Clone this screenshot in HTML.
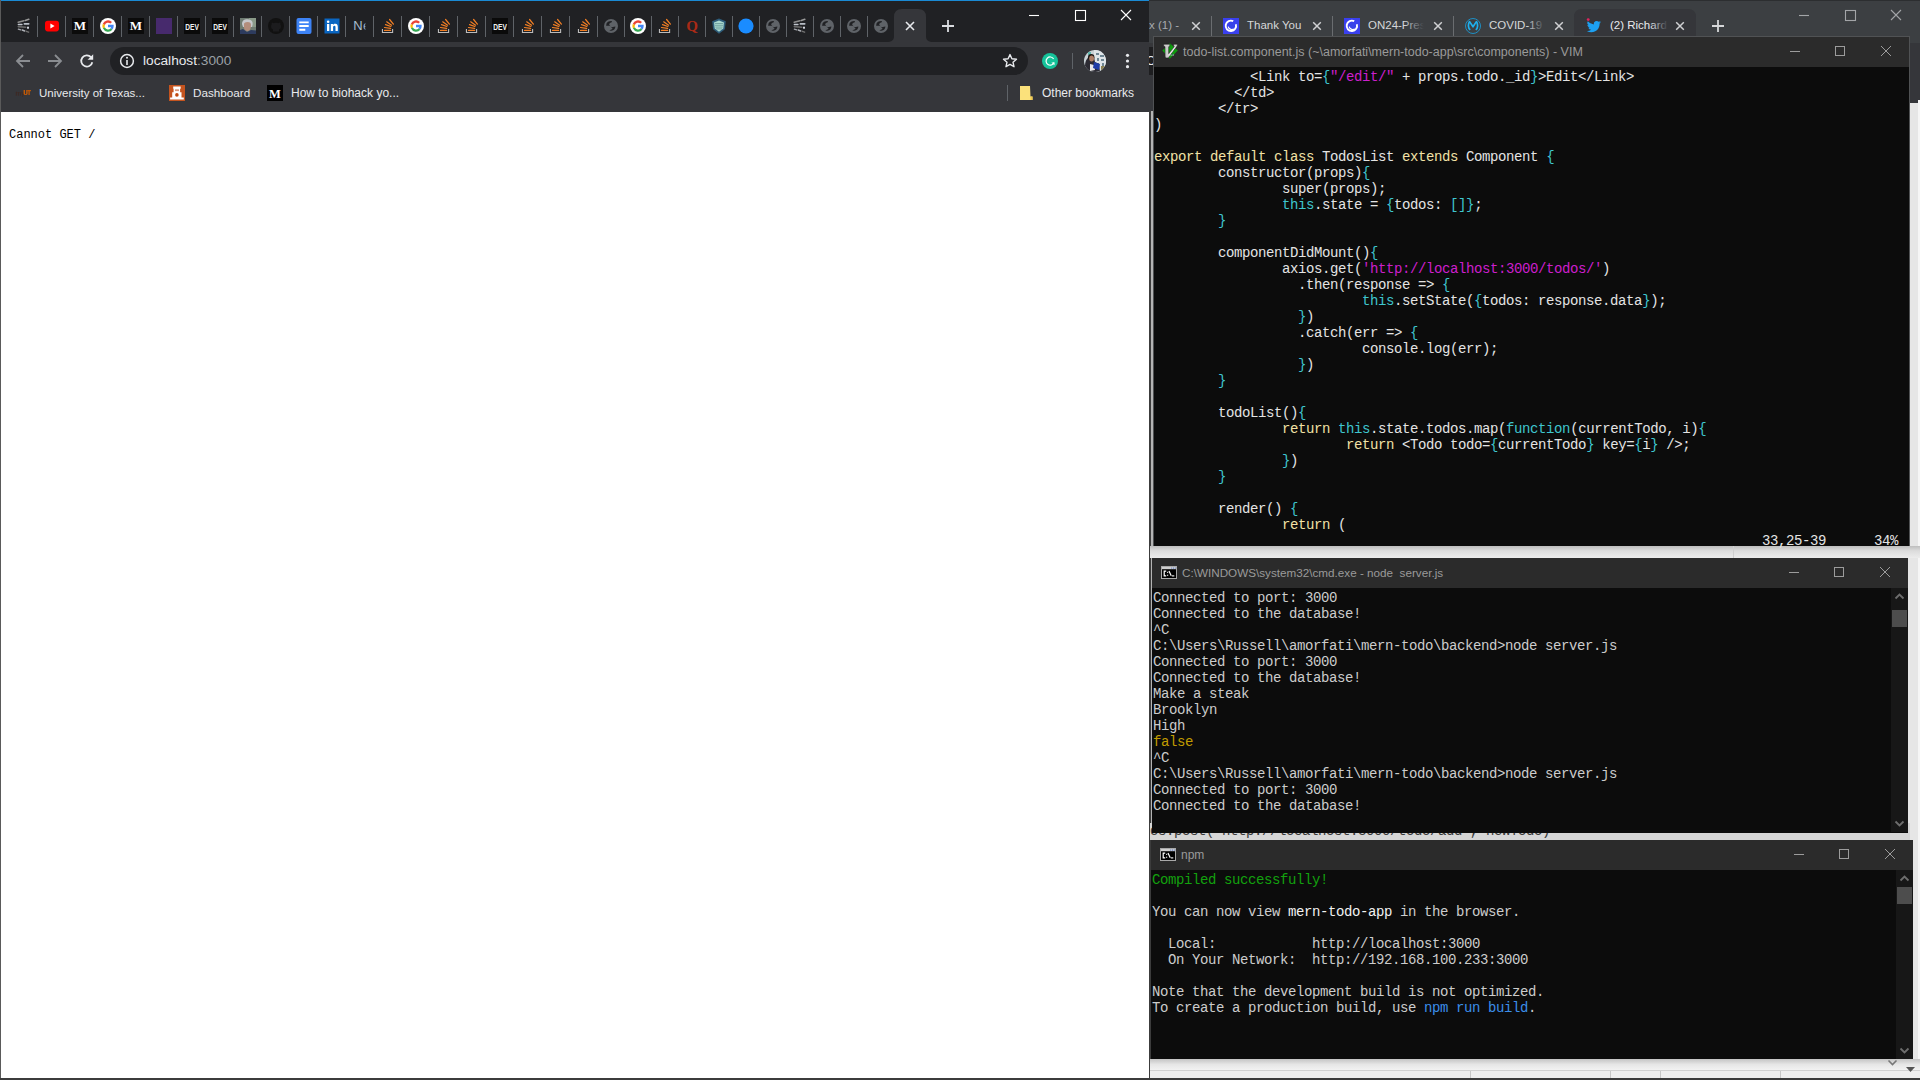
<!DOCTYPE html>
<html><head><meta charset="utf-8"><title>screen</title>
<style>
*{margin:0;padding:0;box-sizing:border-box}
html,body{width:1920px;height:1080px;overflow:hidden;background:#e4e4e4;font-family:"Liberation Sans",sans-serif}
.a{position:absolute}
svg.a{display:block;overflow:visible}
.mono{font-family:"Liberation Mono",monospace;font-size:14px;letter-spacing:-0.4px;line-height:16px;white-space:pre}
.ttl{font-size:13px;color:#9a9a9a;white-space:pre;line-height:16px}
.bm{font-size:12px;color:#e8eaed;white-space:pre;line-height:16px}
.rt{font-size:11.5px;color:#d6d7d9;white-space:pre;line-height:16px}
.k{color:#f2e2a6}.c{color:#3fc6cf}.s{color:#cc1fcc}
</style></head><body>

<svg width="0" height="0" style="position:absolute">
<defs>
<symbol id="fan" viewBox="0 0 16 16"><g stroke-linecap="round">
 <path d="M2.2 4.3L7.8 2.7" stroke="#8d8d8d" stroke-width="1.5"/>
 <path d="M9.2 2.5L12.8 1.3" stroke="#9a9a9a" stroke-width="1.6"/>
 <path d="M2.3 6.5H6" stroke="#bfc4cc" stroke-width="1.3"/>
 <path d="M8.4 5.8H12.7" stroke="#b8bec6" stroke-width="1.7"/>
 <path d="M2.3 8.6L9.7 9.3" stroke="#6a6a6a" stroke-width="1.6"/>
 <rect x="11" y="8.7" width="2" height="2" fill="#d0d4dc"/>
 <path d="M2.3 11.1L4.7 11.8" stroke="#a5a8ae" stroke-width="1.2"/>
 <path d="M6.2 12L8.7 13" stroke="#b0b3b8" stroke-width="1.4"/>
 <path d="M10.3 13.3L12.6 14.2" stroke="#707070" stroke-width="1.4"/>
</g></symbol>
<symbol id="yt" viewBox="0 0 16 16"><rect x="1" y="2.8" width="14" height="10.6" rx="2.8" fill="#f00"/><path d="M6.4 5.6v4.9l4.2-2.45z" fill="#fff"/></symbol>
<symbol id="med" viewBox="0 0 16 16"><rect width="16" height="16" fill="#0b0b0b"/><text x="8" y="12.2" font-family="Liberation Serif" font-weight="bold" font-size="13" text-anchor="middle" fill="#fff">M</text></symbol>
<symbol id="g" viewBox="0 0 16 16"><circle cx="8" cy="8" r="8" fill="#fff"/>
 <g fill="none" stroke-width="2.3">
 <path d="M11.2 4.8A4.5 4.5 0 0 0 3.8 6.5" stroke="#ea4335"/>
 <path d="M3.8 6.5A4.5 4.5 0 0 0 3.9 9.9" stroke="#fbbc05"/>
 <path d="M3.9 9.9A4.5 4.5 0 0 0 11.5 10.9" stroke="#34a853"/>
 <path d="M11.5 10.9A4.5 4.5 0 0 0 12.5 8H8" stroke="#4285f4"/>
 </g></symbol>
<symbol id="purp" viewBox="0 0 16 16"><rect width="16" height="16" fill="#472a6d"/></symbol>
<symbol id="dev" viewBox="0 0 16 16"><rect width="16" height="16" fill="#0a0a0a"/><text x="8" y="12.2" font-family="Liberation Sans" font-weight="bold" font-size="9.4" text-anchor="middle" textLength="13.6" lengthAdjust="spacingAndGlyphs" fill="#f2f2f2">DEV</text></symbol>
<symbol id="photo" viewBox="0 0 16 16"><rect width="16" height="16" fill="#6f7c72"/><rect x="9" width="7" height="9" fill="#8a9a88"/><path d="M2 6C2 2 5 1 8 1.3c3 .3 5 2 4.6 5.3L12 9H3z" fill="#c6c8cc"/><path d="M4 6c0-1 1-2 3.5-2S11 5 11 7l-.3 3c-.3 2-1.7 3-3.3 3S4.3 12 4 10z" fill="#b38d7c"/><path d="M0 16v-4l3-1 4 3 4-2 5 .5V16z" fill="#2d3b5e"/></symbol>
<symbol id="gh" viewBox="0 0 16 16"><circle cx="8" cy="8" r="8" fill="#111"/><path d="M5 13.5v-2c-1-.3-2-1.4-2-3.2 0-.8.3-1.4.7-1.9-.1-.4-.2-1.1.1-1.9.7 0 1.4.4 1.9.8a6.6 6.6 0 0 1 4.6 0c.5-.4 1.2-.8 1.9-.8.3.8.2 1.5.1 1.9.4.5.7 1.1.7 1.9 0 1.8-1 2.9-2 3.2v2z" fill="#1c1c1e"/></symbol>
<symbol id="docs" viewBox="0 0 16 16"><rect x="0.5" y="0" width="15" height="16" rx="2" fill="#3d83f6"/><path d="M3.3 3.4h9.4v1.9H3.3zM3.3 7.1h9.4v1.9H3.3zM3.3 10.8h6v1.9h-6z" fill="#fff"/></symbol>
<symbol id="li" viewBox="0 0 16 16"><rect x="0.5" y="0.5" width="15" height="15" fill="#0a66c2"/><path d="M3 6h2.3v7H3zM4.15 2.5a1.3 1.3 0 1 1 0 2.6 1.3 1.3 0 0 1 0-2.6zM6.8 6h2.2v1c.4-.7 1.2-1.2 2.3-1.2 2.1 0 2.5 1.4 2.5 3.2V13h-2.3V9.6c0-.8 0-1.8-1.1-1.8s-1.3.9-1.3 1.8V13H6.8z" fill="#fff"/></symbol>
<symbol id="ne" viewBox="0 0 16 16"><clipPath id="neclip"><rect x="0" y="0" width="13.4" height="16"/></clipPath><g clip-path="url(#neclip)"><text x="1.3" y="12" font-family="Liberation Sans" font-size="13" fill="#a9bdd0">N<tspan fill="#9aa9bc" dx="0.3">e</tspan></text></g></symbol>
<symbol id="so" viewBox="0 0 16 16"><path d="M2.45 10.9V14.45H12.6V10.9" fill="none" stroke="#bcbbbb" stroke-width="1.1"/><g stroke="#f48024" stroke-width="1.2" stroke-linecap="round" fill="none"><path d="M4.5 12.4H10.6"/><path d="M4.5 9.5L10.6 10.3"/><path d="M5.5 6.6L10.9 8.5"/><path d="M6.7 3.8L11.6 7.2"/><path d="M9.6 1.5L13.4 6.1"/></g></symbol>
<symbol id="globe" viewBox="0 0 16 16"><circle cx="8" cy="8" r="7" fill="#5f6368"/><path d="M8.8 3.1C6.8 2.9 4.8 3.6 3.6 5.3L3.1 7.7H7.3L6.1 6.5C6.5 5.2 7.6 4.6 8.8 4.3z" fill="#202124"/><path d="M7.3 7.7C7.6 8.9 8.6 9.4 9.8 9.1L12.4 8.6C12.3 10.9 10.9 12.6 8.3 12.8L6.3 12.5C7.6 11.9 9 11.6 9.6 10.6 8.8 9.8 7.8 9 7.3 7.7z" fill="#202124"/></symbol>
<symbol id="quora" viewBox="0 0 16 16"><text x="8" y="12.8" font-family="Liberation Serif" font-weight="bold" font-size="15" text-anchor="middle" fill="#a92a16">Q</text></symbol>
<symbol id="shield" viewBox="0 0 16 16"><path d="M8 0.5l6.8 2.8-.9 8L8 15.8 2.1 11.3l-.9-8z" fill="#2e5d7b"/><path d="M8 2.6l5 2-.7 6L8 13.7 3.7 10.6 3 4.6z" fill="#a8d8cf"/><path d="M4 5.5h8M4 7.3h8M4.3 9.1h7.4M5 10.9h6" stroke="#5f8f8f" stroke-width=".7"/></symbol>
<symbol id="blue" viewBox="0 0 16 16"><circle cx="8" cy="8" r="7.6" fill="#1a8cff"/></symbol>
<symbol id="ut" viewBox="0 0 16 16"><path d="M0.8 10.8V6.8H2V7.3C2.4 6.8 3.4 6.7 3.8 7.3 4.3 6.7 5.8 6.7 5.9 7.8V10.8H4.9V8C4.9 7.4 4 7.4 3.9 8V10.8H2.9V8C2.9 7.4 2 7.4 1.9 8V10.8z" fill="#3d2a25"/><path d="M6.2 6.8H7.3L8 9.5 8.7 6.8H7.8" fill="none" stroke="#3d2a25" stroke-width="0"/><path d="M6.3 6.8H7.3L7.9 9.3 8.5 6.8H9.4L7.9 11.9H7L7.4 10.6z" fill="#3d2a25" opacity=".9"/><path d="M8.6 5H10V8.6C10 9.4 11.2 9.4 11.2 8.6V5H12.6V8.7C12.6 10.5 8.6 10.5 8.6 8.7z" fill="#c05a08"/><path d="M12.3 5H16V6.3H14.8V10H13.4V6.3H12.3z" fill="#b85406"/></symbol>
<symbol id="dash" viewBox="0 0 16 16"><rect width="16" height="16" fill="#c4541f"/><path d="M4.2 1.5H11.7V3.7H11.1V7.2H12.5V12.5H14.8V14.5H1.1V12.5H3.2V7.2H4.6V3.7H4.2z" fill="#fff"/><rect x="6" y="4.3" width="4" height="1.8" fill="#d99a80"/><circle cx="7.9" cy="9.9" r="1.8" fill="#c24a10"/></symbol>
<symbol id="medbm" viewBox="0 0 16 16"><rect width="16" height="16" fill="#000"/><text x="8" y="12.6" font-family="Liberation Serif" font-weight="bold" font-size="12.5" text-anchor="middle" fill="#fff">M</text></symbol>
<symbol id="thank" viewBox="0 0 16 16"><rect width="16" height="16" fill="#3a40ee"/><path d="M10.2 3.2A5.2 5.2 0 1 0 12.8 6.2" fill="none" stroke="#fff" stroke-width="1.9"/><path d="M5.3 8.6C5.6 11 8.3 12.3 10.8 11" fill="none" stroke="#fff" stroke-width="1.3"/><circle cx="8.6" cy="7.6" r="2.6" fill="#3844e8"/></symbol>
<symbol id="mule" viewBox="0 0 16 16"><circle cx="8" cy="8" r="7.5" fill="none" stroke="#1e8fc4" stroke-width="1"/><path d="M5.2 11.9C3 10 2.8 6 4.6 3.6L8 8.8 11.4 3.6C13.2 6 13 10 10.8 11.9" fill="none" stroke="#1eb0ee" stroke-width="1.7" stroke-linejoin="round"/></symbol>
<symbol id="tw" viewBox="0 0 16 16"><path d="M15 4.2c-.5.2-1.1.4-1.7.5.6-.4 1.1-1 1.3-1.6-.6.3-1.2.6-1.9.7A2.9 2.9 0 0 0 7.8 6.4 8.3 8.3 0 0 1 1.8 3.3a2.9 2.9 0 0 0 .9 3.9c-.5 0-.9-.2-1.3-.4 0 1.4 1 2.6 2.3 2.9-.4.1-.9.1-1.3 0 .4 1.2 1.5 2 2.7 2a5.9 5.9 0 0 1-4.3 1.2A8.3 8.3 0 0 0 13.6 5.9v-.4c.6-.4 1-.8 1.4-1.3z" fill="#1da1f2"/><circle cx="2.2" cy="1.6" r="1.4" fill="#e0245e"/></symbol>
<symbol id="vimico" viewBox="0 0 16 16"><path d="M0.3 7.6L7.8 0.2 15.8 7.6 7.8 15.8z" fill="#0d9c0d"/><path d="M1.7 1.2H7.8V3.3L6.7 3.7V10.6L12.3 3.6 11.6 3.3V1.2H15.3V3.3L14.4 3.7 6.4 14.9H3.5L3 3.7 1.7 3.3z" fill="#cdcdcd" stroke="#1b1b1b" stroke-width=".55"/><path d="M13.6 3.6L6.9 12.6" stroke="#f4f4f4" stroke-width=".9"/><path d="M3.6 3.8V13.8" stroke="#9a9a9a" stroke-width=".8"/><path d="M8.2 12.3h1.1l.3-.9h.9l-.3.9h.8l.3-.9h.9l-.4 1.2H8z" fill="#c8c8d8"/><circle cx="10.4" cy="11.2" r=".45" fill="#2233aa"/></symbol>
<symbol id="cmdico" viewBox="0 0 16 13"><rect x="0.5" y="0.5" width="15" height="12" fill="#000" stroke="#a8a8a8"/><rect x="1" y="1" width="14" height="2.2" fill="#cfcfcf"/><path d="M10.2 2.1h1M12 2.1h1M13.8 2.1h1" stroke="#3a62c0" stroke-width=".9"/><path d="M5.2 5.2H3.2V9.8H5.2" fill="none" stroke="#fff" stroke-width="1.2"/><rect x="6.1" y="5.8" width="1.1" height="1.1" fill="#fff"/><rect x="6.1" y="8.7" width="1.1" height="1.1" fill="#fff"/><path d="M8 5L10.2 9.7" stroke="#fff" stroke-width="1.2"/><path d="M10.8 9.9H13.3" stroke="#fff" stroke-width="1.1"/></symbol>
</defs></svg>

<!-- ===== right side: background browser ===== -->
<div class="a" style="left:1149px;top:0;width:771px;height:1080px;background:#e6e6e6"></div>
<div class="a" style="left:1149px;top:0;width:771px;height:43px;background:#3c3f42;border-top:1px solid #2c2e30"></div>
<div class="a" style="left:1149px;top:43px;width:771px;height:60px;background:#35363a"></div>
<div class="a" style="left:1918px;top:100px;width:2px;height:980px;background:#f6f6f6"></div>
<div class="a rt" style="left:1149px;top:17px;color:#a9acb0">x (1) -</div>
<div class="a" style="left:1186px;top:10px;width:26px;height:24px;background:linear-gradient(90deg,rgba(60,63,66,0),#3c3f42 40%)"></div>
<svg class="a" style="left:1223px;top:18px" width="16" height="16"><use href="#thank"/></svg>
<div class="a rt" style="left:1247px;top:17px">Thank You</div>
<svg class="a" style="left:1344px;top:18px" width="16" height="16"><use href="#thank"/></svg>
<div class="a rt" style="left:1368px;top:17px">ON24-Pres</div>
<div class="a" style="left:1404px;top:12px;width:22px;height:24px;background:linear-gradient(90deg,rgba(60,63,66,0),#3c3f42 90%)"></div>
<svg class="a" style="left:1465px;top:18px" width="16" height="16"><use href="#mule"/></svg>
<div class="a rt" style="left:1489px;top:17px">COVID-19 </div>
<div class="a" style="left:1527px;top:12px;width:20px;height:24px;background:linear-gradient(90deg,rgba(60,63,66,0),#3c3f42 90%)"></div>
<svg class="a" style="left:1574px;top:9px" width="122" height="27"><path d="M0 27 V8 Q0 0 8 0 H114 Q122 0 122 8 V27z" fill="#35363a"/></svg>
<svg class="a" style="left:1586px;top:18px" width="16" height="16"><use href="#tw"/></svg>
<div class="a rt" style="left:1610px;top:17px;color:#e8eaed">(2) Richard</div>
<div class="a" style="left:1650px;top:12px;width:20px;height:24px;background:linear-gradient(90deg,rgba(53,54,58,0),#35363a 90%)"></div>
<svg class="a" style="left:1191px;top:21px" width="10" height="10"><path d="M1.2 1.2L8.8 8.8M8.8 1.2L1.2 8.8" stroke="#d0d1d3" stroke-width="1.5"/></svg>
<svg class="a" style="left:1312px;top:21px" width="10" height="10"><path d="M1.2 1.2L8.8 8.8M8.8 1.2L1.2 8.8" stroke="#d0d1d3" stroke-width="1.5"/></svg>
<svg class="a" style="left:1433px;top:21px" width="10" height="10"><path d="M1.2 1.2L8.8 8.8M8.8 1.2L1.2 8.8" stroke="#d0d1d3" stroke-width="1.5"/></svg>
<svg class="a" style="left:1554px;top:21px" width="10" height="10"><path d="M1.2 1.2L8.8 8.8M8.8 1.2L1.2 8.8" stroke="#d0d1d3" stroke-width="1.5"/></svg>
<svg class="a" style="left:1675px;top:21px" width="10" height="10"><path d="M1.2 1.2L8.8 8.8M8.8 1.2L1.2 8.8" stroke="#d0d1d3" stroke-width="1.5"/></svg>
<div class="a" style="left:1211px;top:16px;width:1px;height:21px;background:#6a6d70"></div>
<div class="a" style="left:1332px;top:16px;width:1px;height:21px;background:#6a6d70"></div>
<div class="a" style="left:1453px;top:16px;width:1px;height:21px;background:#6a6d70"></div>
<svg class="a" style="left:1712px;top:20px" width="12" height="12"><path d="M6 0V12M0 6H12" stroke="#d6d7d9" stroke-width="1.8"/></svg>
<svg class="a" style="left:1798px;top:9px" width="104" height="12"><path d="M1 6.5H11" stroke="#a3a5a8" stroke-width="1.1"/><rect x="47.5" y="1.5" width="10" height="10" fill="none" stroke="#a3a5a8" stroke-width="1.1"/><path d="M93 1L103 11M103 1L93 11" stroke="#a3a5a8" stroke-width="1.1"/></svg>

<!-- left strip between chrome and windows -->
<div class="a" style="left:1149px;top:43px;width:5px;height:4px;background:#36373a"></div>
<div class="a" style="left:1149px;top:47px;width:5px;height:28px;background:#1e1e20"></div>
<div class="a" style="left:1149px;top:75px;width:5px;height:36px;background:#35363a"></div>
<div class="a" style="left:1149px;top:111px;width:5px;height:967px;background:#b4b4b4"></div>
<div class="a" style="left:1149px;top:111px;width:2px;height:967px;background:#3c3c3c"></div>
<div class="a" style="left:1150px;top:546px;width:770px;height:12px;background:linear-gradient(#bdbdbd,#dcdcdc 40%,#ececec)"></div>
<div class="a" style="left:1150px;top:1059px;width:770px;height:11px;background:linear-gradient(#c4c4c4,#e6e6e6 50%,#f2f2f2)"></div>
<div class="a" style="left:1733px;top:546px;width:1px;height:12px;background:#cfcfcf"></div>
<div class="a" style="left:1149px;top:47px;width:5px;height:28px;overflow:hidden"><div class="a" style="left:-3px;top:6px;font-size:13px;line-height:16px;color:#e8eaed">C</div></div>
<!-- bottom status strip details -->
<div class="a" style="left:1150px;top:1070px;width:770px;height:1px;background:#d2d2d2"></div>
<div class="a" style="left:1150px;top:1071px;width:770px;height:7px;background:#efefef"></div>
<div class="a" style="left:1470px;top:1071px;width:1px;height:7px;background:#c8c8c8"></div>
<div class="a" style="left:1610px;top:1071px;width:1px;height:7px;background:#c8c8c8"></div>
<div class="a" style="left:1660px;top:1071px;width:1px;height:7px;background:#c8c8c8"></div>
<div class="a" style="left:1780px;top:1071px;width:1px;height:7px;background:#c8c8c8"></div>
<svg class="a" style="left:1887px;top:1059px" width="11" height="8"><path d="M1.5 1.5L5.5 5.5 9.5 1.5" fill="none" stroke="#777" stroke-width="1.6"/></svg>
<svg class="a" style="left:1906px;top:1067px" width="9" height="6"><path d="M0 0H9L4.5 5z" fill="#555"/></svg>
<!-- behind text strip -->
<div class="a mono" style="left:1150px;top:823px;color:#3a3a3a;width:760px;height:17px;overflow:hidden;background:#d6d6d6">os.post('http://localhost:3000/todo/add', newTodo)</div>

<!-- ===== VIM window ===== -->
<div id="vim" class="a" style="left:1153px;top:36px;width:757px;height:510px;background:#0c0c0c;border:1px solid #505254;border-bottom:0">
  <div class="a" style="left:0;top:0;width:755px;height:30px;background:#2b2b2b"></div>
  <svg class="a" style="left:8px;top:6px" width="16" height="16"><use href="#vimico"/></svg>
  <div class="a ttl" style="left:29px;top:7px;font-size:12.5px">todo-list.component.js (~\amorfati\mern-todo-app\src\components) - VIM</div>
  <svg class="a" style="left:635px;top:8px" width="104" height="12"><path d="M1 6.5H11" stroke="#9c9c9c" stroke-width="1"/><rect x="46.5" y="1.5" width="9" height="9" fill="none" stroke="#9c9c9c" stroke-width="1"/><path d="M92 1L102 11M102 1L92 11" stroke="#9c9c9c" stroke-width="1"/></svg>
  <div class="a mono" style="left:0;top:32px;color:#e4e4e4">            &lt;Link to=<span class="c">{</span><span class="s">"/edit/"</span> + props.todo._id<span class="c">}</span>&gt;Edit&lt;/Link&gt;
          &lt;/td&gt;
        &lt;/tr&gt;
)

<span class="k">export</span> <span class="k">default</span> <span class="k">class</span> TodosList <span class="k">extends</span> Component <span class="c">{</span>
        constructor(props)<span class="c">{</span>
                super(props);
                <span class="c">this</span>.state = <span class="c">{</span>todos: <span class="c">[]</span><span class="c">}</span>;
        <span class="c">}</span>

        componentDidMount()<span class="c">{</span>
                axios.get(<span class="s">'http://localhost:3000/todos/'</span>)
                  .then(response =&gt; <span class="c">{</span>
                          <span class="c">this</span>.setState(<span class="c">{</span>todos: response.data<span class="c">}</span>);
                  <span class="c">}</span>)
                  .catch(err =&gt; <span class="c">{</span>
                          console.log(err);
                  <span class="c">}</span>)
        <span class="c">}</span>

        todoList()<span class="c">{</span>
                <span class="k">return</span> <span class="c">this</span>.state.todos.map(<span class="c">function</span>(currentTodo, i)<span class="c">{</span>
                        <span class="k">return</span> &lt;Todo todo=<span class="c">{</span>currentTodo<span class="c">}</span> key=<span class="c">{</span>i<span class="c">}</span> /&gt;;
                <span class="c">}</span>)
        <span class="c">}</span>

        render() <span class="c">{</span>
                <span class="k">return</span> (</div>
  <div class="a mono" style="left:608px;top:496px;color:#e4e4e4">33,25-39</div>
  <div class="a mono" style="left:720px;top:496px;color:#e4e4e4">34%</div>
</div>

<!-- ===== cmd window ===== -->
<div id="cmd" class="a" style="left:1152px;top:558px;width:756px;height:275px;background:#0c0c0c">
  <div class="a" style="left:0;top:0;width:756px;height:30px;background:#2b2b2b"></div>
  <svg class="a" style="left:9px;top:8px" width="16" height="13"><use href="#cmdico"/></svg>
  <div class="a ttl" style="left:30px;top:7px;font-size:11.7px">C:\WINDOWS\system32\cmd.exe - node  server.js</div>
  <svg class="a" style="left:636px;top:8px" width="104" height="12"><path d="M1 6.5H11" stroke="#9c9c9c" stroke-width="1"/><rect x="46.5" y="1.5" width="9" height="9" fill="none" stroke="#9c9c9c" stroke-width="1"/><path d="M92 1L102 11M102 1L92 11" stroke="#9c9c9c" stroke-width="1"/></svg>
  <div class="a mono" style="left:1px;top:32px;color:#cccccc">Connected to port: 3000
Connected to the database!
^C
C:\Users\Russell\amorfati\mern-todo\backend&gt;node server.js
Connected to port: 3000
Connected to the database!
Make a steak
Brooklyn
High
<span style="color:#c19c00">false</span>
^C
C:\Users\Russell\amorfati\mern-todo\backend&gt;node server.js
Connected to port: 3000
Connected to the database!</div>
</div>
<div class="a" style="left:1891px;top:588px;width:17px;height:244px;background:#171717"></div>
<svg class="a" style="left:1891px;top:588px" width="17" height="17"><path d="M4.5 10.5L8.5 6.5 12.5 10.5" fill="none" stroke="#6e6e6e" stroke-width="1.8"/></svg>
<div class="a" style="left:1892px;top:610px;width:15px;height:17px;background:#4d4d4d"></div>
<svg class="a" style="left:1891px;top:815px" width="17" height="17"><path d="M4.5 6.5L8.5 10.5 12.5 6.5" fill="none" stroke="#6e6e6e" stroke-width="1.8"/></svg>

<!-- ===== npm window ===== -->
<div id="npm" class="a" style="left:1151px;top:840px;width:762px;height:219px;background:#0c0c0c">
  <div class="a" style="left:0;top:0;width:762px;height:30px;background:#2b2b2b"></div>
  <svg class="a" style="left:9px;top:8px" width="16" height="13"><use href="#cmdico"/></svg>
  <div class="a ttl" style="left:30px;top:7px;font-size:12px">npm</div>
  <svg class="a" style="left:642px;top:8px" width="104" height="12"><path d="M1 6.5H11" stroke="#9c9c9c" stroke-width="1"/><rect x="46.5" y="1.5" width="9" height="9" fill="none" stroke="#9c9c9c" stroke-width="1"/><path d="M92 1L102 11M102 1L92 11" stroke="#9c9c9c" stroke-width="1"/></svg>
  <div class="a mono" style="left:1px;top:32px;color:#cccccc"><span style="color:#13a10e">Compiled successfully!</span>

You can now view <span style="color:#f2f2f2">mern-todo-app</span> in the browser.

  Local:            http://localhost:3000
  On Your Network:  http://192.168.100.233:3000

Note that the development build is not optimized.
To create a production build, use <span style="color:#3b8eea">npm run build</span>.</div>
</div>
<div class="a" style="left:1896px;top:870px;width:17px;height:189px;background:#171717"></div>
<svg class="a" style="left:1896px;top:870px" width="17" height="17"><path d="M4.5 10.5L8.5 6.5 12.5 10.5" fill="none" stroke="#6e6e6e" stroke-width="1.8"/></svg>
<div class="a" style="left:1897px;top:887px;width:15px;height:17px;background:#4d4d4d"></div>
<svg class="a" style="left:1896px;top:1042px" width="17" height="17"><path d="M4.5 6.5L8.5 10.5 12.5 6.5" fill="none" stroke="#6e6e6e" stroke-width="1.8"/></svg>

<!-- ===== Chrome window ===== -->
<div id="chrome" class="a" style="left:0;top:0;width:1149px;height:1080px;background:#fff;overflow:hidden">
  <div class="a" style="left:0;top:0;width:1149px;height:42px;background:#202124"></div>
  <div class="a" style="left:0;top:42px;width:1149px;height:70px;background:#35363a"></div>
  <svg class="a" style="left:16px;top:18px" width="16" height="16"><use href="#fan"/></svg>
<svg class="a" style="left:44px;top:18px" width="16" height="16"><use href="#yt"/></svg>
<svg class="a" style="left:72px;top:18px" width="16" height="16"><use href="#med"/></svg>
<svg class="a" style="left:100px;top:18px" width="16" height="16"><use href="#g"/></svg>
<svg class="a" style="left:128px;top:18px" width="16" height="16"><use href="#med"/></svg>
<svg class="a" style="left:156px;top:18px" width="16" height="16"><use href="#purp"/></svg>
<svg class="a" style="left:184px;top:18px" width="16" height="16"><use href="#dev"/></svg>
<svg class="a" style="left:212px;top:18px" width="16" height="16"><use href="#dev"/></svg>
<svg class="a" style="left:240px;top:18px" width="16" height="16"><use href="#photo"/></svg>
<svg class="a" style="left:268px;top:18px" width="16" height="16"><use href="#gh"/></svg>
<svg class="a" style="left:296px;top:18px" width="16" height="16"><use href="#docs"/></svg>
<svg class="a" style="left:324px;top:18px" width="16" height="16"><use href="#li"/></svg>
<svg class="a" style="left:352px;top:18px" width="16" height="16"><use href="#ne"/></svg>
<svg class="a" style="left:380px;top:18px" width="16" height="16"><use href="#so"/></svg>
<svg class="a" style="left:408px;top:18px" width="16" height="16"><use href="#g"/></svg>
<svg class="a" style="left:436px;top:18px" width="16" height="16"><use href="#so"/></svg>
<svg class="a" style="left:464px;top:18px" width="16" height="16"><use href="#so"/></svg>
<svg class="a" style="left:492px;top:18px" width="16" height="16"><use href="#dev"/></svg>
<svg class="a" style="left:520px;top:18px" width="16" height="16"><use href="#so"/></svg>
<svg class="a" style="left:548px;top:18px" width="16" height="16"><use href="#so"/></svg>
<svg class="a" style="left:576px;top:18px" width="16" height="16"><use href="#so"/></svg>
<svg class="a" style="left:603px;top:18px" width="16" height="16"><use href="#globe"/></svg>
<svg class="a" style="left:630px;top:18px" width="16" height="16"><use href="#g"/></svg>
<svg class="a" style="left:657px;top:18px" width="16" height="16"><use href="#so"/></svg>
<svg class="a" style="left:684px;top:18px" width="16" height="16"><use href="#quora"/></svg>
<svg class="a" style="left:711px;top:18px" width="16" height="16"><use href="#shield"/></svg>
<svg class="a" style="left:738px;top:18px" width="16" height="16"><use href="#blue"/></svg>
<svg class="a" style="left:765px;top:18px" width="16" height="16"><use href="#globe"/></svg>
<svg class="a" style="left:792px;top:18px" width="16" height="16"><use href="#fan"/></svg>
<svg class="a" style="left:819px;top:18px" width="16" height="16"><use href="#globe"/></svg>
<svg class="a" style="left:846px;top:18px" width="16" height="16"><use href="#globe"/></svg>
<svg class="a" style="left:873px;top:18px" width="16" height="16"><use href="#globe"/></svg>
<div class="a" style="left:37px;top:16px;width:1px;height:21px;background:#5f6368"></div>
<div class="a" style="left:65px;top:16px;width:1px;height:21px;background:#5f6368"></div>
<div class="a" style="left:93px;top:16px;width:1px;height:21px;background:#5f6368"></div>
<div class="a" style="left:121px;top:16px;width:1px;height:21px;background:#5f6368"></div>
<div class="a" style="left:149px;top:16px;width:1px;height:21px;background:#5f6368"></div>
<div class="a" style="left:177px;top:16px;width:1px;height:21px;background:#5f6368"></div>
<div class="a" style="left:205px;top:16px;width:1px;height:21px;background:#5f6368"></div>
<div class="a" style="left:233px;top:16px;width:1px;height:21px;background:#5f6368"></div>
<div class="a" style="left:261px;top:16px;width:1px;height:21px;background:#5f6368"></div>
<div class="a" style="left:289px;top:16px;width:1px;height:21px;background:#5f6368"></div>
<div class="a" style="left:317px;top:16px;width:1px;height:21px;background:#5f6368"></div>
<div class="a" style="left:345px;top:16px;width:1px;height:21px;background:#5f6368"></div>
<div class="a" style="left:373px;top:16px;width:1px;height:21px;background:#5f6368"></div>
<div class="a" style="left:401px;top:16px;width:1px;height:21px;background:#5f6368"></div>
<div class="a" style="left:429px;top:16px;width:1px;height:21px;background:#5f6368"></div>
<div class="a" style="left:457px;top:16px;width:1px;height:21px;background:#5f6368"></div>
<div class="a" style="left:485px;top:16px;width:1px;height:21px;background:#5f6368"></div>
<div class="a" style="left:513px;top:16px;width:1px;height:21px;background:#5f6368"></div>
<div class="a" style="left:541px;top:16px;width:1px;height:21px;background:#5f6368"></div>
<div class="a" style="left:569px;top:16px;width:1px;height:21px;background:#5f6368"></div>
<div class="a" style="left:597px;top:16px;width:1px;height:21px;background:#5f6368"></div>
<div class="a" style="left:624px;top:16px;width:1px;height:21px;background:#5f6368"></div>
<div class="a" style="left:651px;top:16px;width:1px;height:21px;background:#5f6368"></div>
<div class="a" style="left:678px;top:16px;width:1px;height:21px;background:#5f6368"></div>
<div class="a" style="left:705px;top:16px;width:1px;height:21px;background:#5f6368"></div>
<div class="a" style="left:732px;top:16px;width:1px;height:21px;background:#5f6368"></div>
<div class="a" style="left:759px;top:16px;width:1px;height:21px;background:#5f6368"></div>
<div class="a" style="left:786px;top:16px;width:1px;height:21px;background:#5f6368"></div>
<div class="a" style="left:813px;top:16px;width:1px;height:21px;background:#5f6368"></div>
<div class="a" style="left:840px;top:16px;width:1px;height:21px;background:#5f6368"></div>
<div class="a" style="left:867px;top:16px;width:1px;height:21px;background:#5f6368"></div>
  <svg class="a" style="left:886px;top:9px" width="48" height="34"><path d="M0 33 C6 33 8 31 8 27 V8 Q8 0 16 0 H32 Q40 0 40 8 V27 C40 31 42 33 48 33 V34 H0z" fill="#35363a"/></svg>
<svg class="a" style="left:905px;top:21px" width="10" height="10"><path d="M1 1L9 9M9 1L1 9" stroke="#e8eaed" stroke-width="1.6"/></svg>
<svg class="a" style="left:942px;top:20px" width="12" height="12"><path d="M6 0V12M0 6H12" stroke="#dadce0" stroke-width="1.8"/></svg>
<svg class="a" style="left:1028px;top:9px" width="104" height="12"><path d="M1 6.5H11" stroke="#fff" stroke-width="1.1"/><rect x="47.5" y="1.5" width="10" height="10" fill="none" stroke="#fff" stroke-width="1.1"/><path d="M93 1L103 11M103 1L93 11" stroke="#fff" stroke-width="1.1"/></svg>
  <svg class="a" style="left:15px;top:53px" width="16" height="16"><path d="M15 8H2.5M8 2L2 8l6 6" fill="none" stroke="#8a8d91" stroke-width="1.8"/></svg>
<svg class="a" style="left:47px;top:53px" width="16" height="16"><path d="M1 8h12.5M8 2l6 6-6 6" fill="none" stroke="#8a8d91" stroke-width="1.8"/></svg>
<svg class="a" style="left:79px;top:53px" width="16" height="16"><path d="M13.3 9.2A5.6 5.6 0 1 1 12 4.2" fill="none" stroke="#e8eaed" stroke-width="1.8"/><path d="M14.2 1.2v5.6H8.6z" fill="#e8eaed"/></svg>
<div class="a" style="left:110px;top:47px;width:918px;height:28px;border-radius:14px;background:#202124"></div>
<svg class="a" style="left:119px;top:53px" width="16" height="16"><circle cx="8" cy="8" r="6.4" fill="none" stroke="#e8eaed" stroke-width="1.5"/><path d="M8 7v5" stroke="#e8eaed" stroke-width="1.6"/><circle cx="8" cy="4.8" r="1" fill="#e8eaed"/></svg>
<div class="a" style="left:143px;top:53px;font-size:13.7px;line-height:16px;color:#e8eaed;white-space:pre">localhost<span style="color:#9aa0a6">:3000</span></div>
<svg class="a" style="left:1002px;top:53px" width="16" height="16"><path d="M8 1.6l1.9 4.2 4.6.4-3.5 3 1 4.5L8 11.4l-4 2.3 1-4.5-3.5-3 4.6-.4z" fill="none" stroke="#e8eaed" stroke-width="1.4" stroke-linejoin="round"/></svg>
<svg class="a" style="left:1042px;top:53px" width="16" height="16"><circle cx="8" cy="8" r="8" fill="#15c39a"/><path d="M11.6 5.8A4.1 4.1 0 1 0 12 9.6" fill="none" stroke="#f4fffb" stroke-width="1.25"/><path d="M9.4 9.4h3.1v2.9z" fill="#f4fffb"/></svg>
<div class="a" style="left:1072px;top:53px;width:1px;height:16px;background:#5f6368"></div>
<svg class="a" style="left:1084px;top:50px" width="22" height="22"><defs><clipPath id="avc"><circle cx="11" cy="11" r="11"/></clipPath></defs><g clip-path="url(#avc)"><rect width="22" height="22" fill="#c9d2d6"/><path d="M10 0h12v22H10z" fill="#dfe5e8"/><path d="M12 3h3v2h-3zM16 5h4v2h-4zM13 8h2v3h-2zM17 9h3v2h-3zM12 13h3v1h-3zM18 13h2v4h-2z" fill="#6f8794"/><path d="M4 2h3v3H4z" fill="#5fb8b0"/><path d="M1 16c0-4 1-7 4-9h5l1 5 4 2 1 8H1z" fill="#2c2b33"/><circle cx="7.2" cy="7.3" r="3.2" fill="#1c1612"/><ellipse cx="7.6" cy="8.6" rx="2.4" ry="3" fill="#b08068"/><path d="M6 14l4 1 1 5-5 1z" fill="#e8e8ea"/><path d="M10 12l6 2-1 6-6-2z" fill="#1f3da8"/><path d="M17 16h4v5h-4z" fill="#8a8050"/></g></svg>
<svg class="a" style="left:1124px;top:53px" width="8" height="16"><circle cx="3.5" cy="2.3" r="1.6" fill="#e8eaed"/><circle cx="3.5" cy="8" r="1.6" fill="#e8eaed"/><circle cx="3.5" cy="13.7" r="1.6" fill="#e8eaed"/></svg>
<svg class="a" style="left:15px;top:85px" width="16" height="16"><use href="#ut"/></svg>
<div class="a bm" style="left:39px;top:85px;font-size:11.5px">University of Texas...</div>
<svg class="a" style="left:169px;top:85px" width="16" height="16"><use href="#dash"/></svg>
<div class="a bm" style="left:193px;top:85px;font-size:11.7px">Dashboard</div>
<svg class="a" style="left:267px;top:85px" width="16" height="16"><use href="#medbm"/></svg>
<div class="a bm" style="left:291px;top:85px">How to biohack yo...</div>
<div class="a" style="left:1007px;top:85px;width:1px;height:16px;background:#5f6368"></div>
<svg class="a" style="left:1020px;top:86px" width="13" height="14"><path d="M0 0h10l.5 10.5h2V14H0z" fill="#fbe17b"/><path d="M10.5 10.5h2V14h-2z" fill="#f0c94f"/></svg>
<div class="a bm" style="left:1042px;top:85px">Other bookmarks</div>

  <div class="a" style="left:9px;top:127px;font-family:'Liberation Mono',monospace;font-size:12px;line-height:16px;color:#000;white-space:pre">Cannot GET /</div>
  <div class="a" style="left:0;top:0;width:1149px;height:1px;background:#1a8ad4"></div>
  <div class="a" style="left:0;top:0;width:1px;height:1080px;background:#5a5a5a"></div>
</div>

<div class="a" style="left:0;top:1078px;width:1920px;height:2px;background:#3c3c3c"></div>
</body></html>
